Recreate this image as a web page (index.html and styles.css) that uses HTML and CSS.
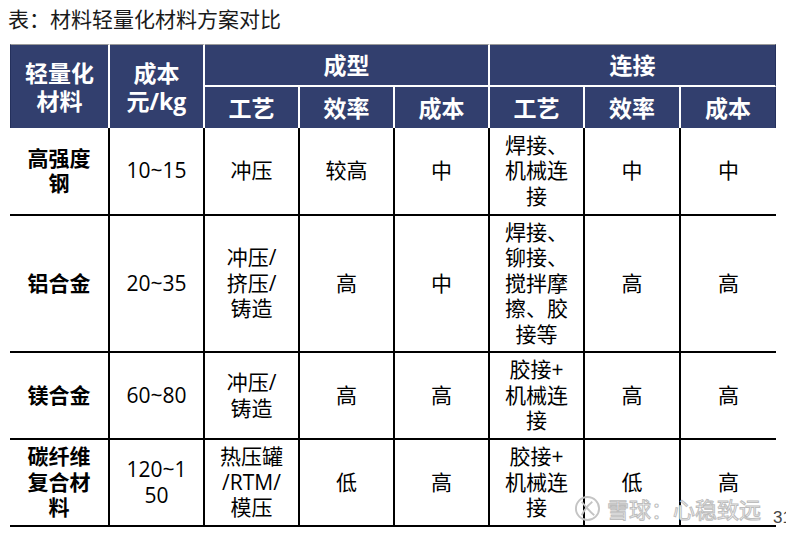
FILE: index.html
```html
<!DOCTYPE html>
<html lang="zh">
<head>
<meta charset="utf-8">
<title>材料轻量化材料方案对比</title>
<link rel="stylesheet" href="styles.css">
</head>
<body>
<div class="page">
  <p class="caption">表：材料轻量化材料方案对比</p>
  <table class="cmp">
    <colgroup>
      <col class="c-mat"><col class="c-n"><col class="c-n"><col class="c-n"><col class="c-n"><col class="c-n"><col class="c-w"><col class="c-n">
    </colgroup>
    <thead>
      <tr class="h1">
        <th rowspan="2" class="first tall">轻量化<br>材料</th>
        <th rowspan="2" class="tall">成本<br>元/kg</th>
        <th colspan="3" class="grp">成型</th>
        <th colspan="3" class="grp last">连接</th>
      </tr>
      <tr class="h2">
        <th>工艺</th><th>效率</th><th>成本</th>
        <th>工艺</th><th>效率</th><th class="last">成本</th>
      </tr>
    </thead>
    <tbody>
      <tr class="r1">
        <td class="mat">高强度<br>钢</td><td>10~15</td><td>冲压</td><td>较高</td><td>中</td>
        <td>焊接、<br>机械连<br>接</td><td>中</td><td class="last">中</td>
      </tr>
      <tr class="r2">
        <td class="mat">铝合金</td><td>20~35</td><td>冲压/<br>挤压/<br>铸造</td><td>高</td><td>中</td>
        <td>焊接、<br>铆接、<br>搅拌摩<br>擦、胶<br>接等</td><td>高</td><td class="last">高</td>
      </tr>
      <tr class="r3">
        <td class="mat">镁合金</td><td>60~80</td><td>冲压/<br>铸造</td><td>高</td><td>高</td>
        <td>胶接+<br>机械连<br>接</td><td>高</td><td class="last">高</td>
      </tr>
      <tr class="r4">
        <td class="mat">碳纤维<br>复合材<br>料</td><td>120~1<br>50</td><td>热压罐<br>/RTM/<br>模压</td><td>低</td><td>高</td>
        <td>胶接+<br>机械连<br>接</td><td>低</td><td class="last">高</td>
      </tr>
    </tbody>
  </table>
  <div class="watermark">
    <svg class="wm-logo" width="27" height="27" viewBox="0 0 28 28" aria-hidden="true">
      <circle cx="14" cy="14" r="12" fill="none" stroke="#c4c4c4" stroke-width="2"/>
      <path d="M8 7 C 12 12, 16 17, 21 21" fill="none" stroke="#c4c4c4" stroke-width="2"/>
      <path d="M19 7 C 15 10, 11 15, 8 21" fill="none" stroke="#c4c4c4" stroke-width="2"/>
    </svg>
    <span class="wm-text">雪球：心稳致远</span>
  </div>
  <span class="pageno">31</span>
</div>
</body>
</html>
```
FILE: styles.css
```css
html, body {
  margin: 0;
  padding: 0;
  background: #fff;
}
.page {
  position: relative;
  width: 786px;
  height: 534px;
  overflow: hidden;
  font-family: "Noto Sans CJK SC", "Noto Sans", sans-serif;
}
.caption {
  margin: 0;
  height: 44px;
  box-sizing: border-box;
  padding: 4px 0 0 8px;
  font-size: 21px;
  line-height: 28px;
  color: #1a1a1a;
}
.cmp {
  margin-left: 10px;
  width: 766px;
  table-layout: fixed;
  border-collapse: separate;
  border-spacing: 0;
}
.c-mat { width: 100px; }
.c-n { width: 95px; }
.c-w { width: 96px; }

.cmp th {
  background: #323f6e;
  color: #fff;
  font-family: "Open Sans", "Noto Sans CJK SC", sans-serif;
  font-weight: 700;
  font-size: 23px;
  line-height: 28px;
  padding: 0;
  text-align: center;
  vertical-align: middle;
  border-right: 2px solid #fff;
  box-sizing: border-box;
}
.cmp th.last { border-right: 1px solid #24305c; }
.cmp th.first { border-left: 1px solid #24305c; }
.cmp .h1 th { border-top: 1px solid #9a9a9a; height: 43px; }
.cmp .h1 th.grp { border-bottom: 2px solid #fff; }
.cmp .h2 th { height: 41px; }

.cmp td {
  font-family: "Open Sans", "Noto Sans CJK SC", sans-serif;
  font-size: 21px;
  line-height: 25.5px;
  color: #000;
  text-align: center;
  vertical-align: middle;
  padding: 0;
  border-right: 2px solid #000;
  border-bottom: 2px solid #000;
  box-sizing: border-box;
}
.cmp td.last { border-right: none; }
.cmp td.mat { font-weight: 700; }
.cmp .r1 td { height: 88px; }
.cmp .r2 td { height: 137px; }
.cmp .r3 td { height: 87px; }
.cmp .r4 td { height: 87px; }

.watermark {
  position: absolute;
  left: 574px;
  top: 494px;
  display: flex;
  align-items: center;
  gap: 6px;
}
.wm-text {
  font-size: 22px;
  line-height: 28px;
  color: #fff;
  -webkit-text-stroke: 1px #bdbdbd;
}
.pageno {
  position: absolute;
  left: 773px;
  top: 508px;
  font-size: 17px;
  line-height: 20px;
  color: #444;
  font-family: "Liberation Sans", sans-serif;
}
```
